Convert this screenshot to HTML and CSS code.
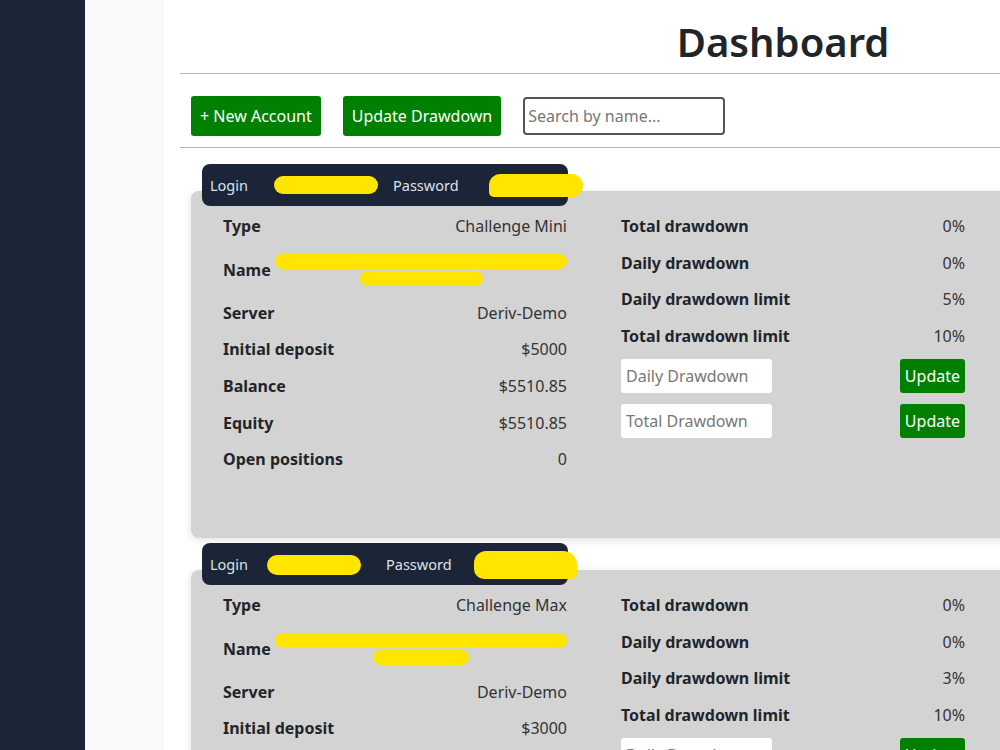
FILE: index.html
```html
<!DOCTYPE html>
<html lang="en">
<head>
    <meta charset="UTF-8">
    <meta name="viewport" content="width=device-width, initial-scale=1.0">
    <title>Dashboard</title>
    <link rel="stylesheet" href="styles.css">
</head>
<body>

<div class="layout">
    <!-- Sidebar -->
    <aside class="sidebar"></aside>
    <div class="rail"></div>

    <!-- Main content -->
    <main class="main">
        <h1 class="title">Dashboard</h1>
        <hr class="divider">

        <div class="toolbar">
            <button class="btn">+ New Account</button>
            <button class="btn">Update Drawdown</button>
            <input type="text" class="search" placeholder="Search by name...">
        </div>
        <hr class="divider">

        <div class="accounts">
            <!-- Account 1 -->
            <section class="account">
                <div class="creds">
                    <span>Login</span>
                    <span class="mark mark-login"></span>
                    <span>Password</span>
                    <span class="mark mark-pass"></span>
                </div>
                <div class="card">
                    <div class="col">
                        <div class="row"><span class="label">Type</span><span class="value">Challenge Mini</span></div>
                        <div class="row row-name">
                            <span class="label">Name</span>
                            <span class="value name-marks">
                                <span class="mark mark-name1"></span>
                                <span class="mark mark-name2"></span>
                            </span>
                        </div>
                        <div class="row"><span class="label">Server</span><span class="value">Deriv-Demo</span></div>
                        <div class="row"><span class="label">Initial deposit</span><span class="value">$5000</span></div>
                        <div class="row"><span class="label">Balance</span><span class="value">$5510.85</span></div>
                        <div class="row"><span class="label">Equity</span><span class="value">$5510.85</span></div>
                        <div class="row"><span class="label">Open positions</span><span class="value">0</span></div>
                    </div>
                    <div class="col">
                        <div class="row"><span class="label">Total drawdown</span><span class="value">0%</span></div>
                        <div class="row"><span class="label">Daily drawdown</span><span class="value">0%</span></div>
                        <div class="row"><span class="label">Daily drawdown limit</span><span class="value">5%</span></div>
                        <div class="row"><span class="label">Total drawdown limit</span><span class="value">10%</span></div>
                        <div class="form-row">
                            <input type="text" class="field" placeholder="Daily Drawdown">
                            <button class="btn btn-small">Update</button>
                        </div>
                        <div class="form-row">
                            <input type="text" class="field" placeholder="Total Drawdown">
                            <button class="btn btn-small">Update</button>
                        </div>
                    </div>
                </div>
            </section>

            <!-- Account 2 -->
            <section class="account">
                <div class="creds">
                    <span>Login</span>
                    <span class="mark mark-login2"></span>
                    <span>Password</span>
                    <span class="mark mark-pass2"></span>
                </div>
                <div class="card">
                    <div class="col">
                        <div class="row"><span class="label">Type</span><span class="value">Challenge Max</span></div>
                        <div class="row row-name">
                            <span class="label">Name</span>
                            <span class="value name-marks">
                                <span class="mark mark-name1"></span>
                                <span class="mark mark-name3"></span>
                            </span>
                        </div>
                        <div class="row"><span class="label">Server</span><span class="value">Deriv-Demo</span></div>
                        <div class="row"><span class="label">Initial deposit</span><span class="value">$3000</span></div>
                        <div class="row"><span class="label">Balance</span><span class="value">$3000</span></div>
                        <div class="row"><span class="label">Equity</span><span class="value">$3000</span></div>
                        <div class="row"><span class="label">Open positions</span><span class="value">0</span></div>
                    </div>
                    <div class="col">
                        <div class="row"><span class="label">Total drawdown</span><span class="value">0%</span></div>
                        <div class="row"><span class="label">Daily drawdown</span><span class="value">0%</span></div>
                        <div class="row"><span class="label">Daily drawdown limit</span><span class="value">3%</span></div>
                        <div class="row"><span class="label">Total drawdown limit</span><span class="value">10%</span></div>
                        <div class="form-row">
                            <input type="text" class="field" placeholder="Daily Drawdown">
                            <button class="btn btn-small">Update</button>
                        </div>
                        <div class="form-row">
                            <input type="text" class="field" placeholder="Total Drawdown">
                            <button class="btn btn-small">Update</button>
                        </div>
                    </div>
                </div>
            </section>
        </div>
    </main>
</div>

</body>
</html>
```

FILE: styles.css
```css
body {
    margin: 0;
    font-family: "Noto Sans", "Open Sans", sans-serif;
    color: #212529;
    overflow: hidden;
}
.layout {
    display: flex;
    min-height: 100vh;
}
.sidebar {
    width: 85px;
    flex-shrink: 0;
    background: #1b2537;
}
.rail {
    width: 79px;
    flex-shrink: 0;
    background: #f8f9fb;
}
.main {
    width: 1206px;
    flex-shrink: 0;
    padding: 0 0 0 16px;
}
.title {
    margin: 0;
    padding-top: 12px;
    height: 73px;
    line-height: 60px;
    font-size: 40px;
    font-weight: 600;
    text-align: center;
    box-sizing: border-box;
}
.divider {
    margin: 0;
    border: none;
    border-top: 1px solid #b4b4b4;
}

/* Toolbar */
.toolbar {
    display: flex;
    align-items: center;
    gap: 22px;
    padding: 22px 11px 11px;
}
.btn {
    background: #008000;
    color: #fff;
    border: none;
    border-radius: 3px;
    font-family: inherit;
    font-size: 16px;
    height: 40px;
    padding: 0 9px;
    cursor: pointer;
}
.search {
    width: 202px;
    height: 38px;
    box-sizing: border-box;
    border: 2px solid #555;
    border-radius: 4px;
    padding: 0 3px;
    font-family: inherit;
    font-size: 16px;
}
.search::placeholder,
.field::placeholder {
    color: #777;
}

/* Accounts */
.accounts {
    display: flex;
    flex-direction: column;
    gap: 5px;
    padding: 16px 0 0 11px;
}
.creds {
    position: relative;
    z-index: 1;
    display: flex;
    align-items: center;
    width: 366px;
    height: 42px;
    box-sizing: border-box;
    margin-left: 11px;
    padding-left: 8px;
    background: #1b2537;
    color: #dde1e7;
    border-radius: 8px;
    font-size: 14.5px;
}
.creds > span {
    flex-shrink: 0;
}
.mark {
    display: inline-block;
    background: #ffe500;
    border-radius: 10px;
}
.mark-login { width: 104px; height: 18px; margin: 0 15px 0 26px; }
.mark-pass { width: 94px; height: 23px; margin: 0 0 0 30px; border-radius: 12px 12px 12px 5px; }
.mark-login2 { width: 94px; height: 20px; margin: 2px 25px 0 19px; }
.mark-pass2 { width: 103px; height: 28px; margin: 2px 0 0 22px; border-radius: 12px 14px 6px 10px; }

.card {
    display: flex;
    gap: 54px;
    margin-top: -15px;
    width: 1180px;
    min-height: 347px;
    box-sizing: border-box;
    padding: 17px 32px 0;
    background: #d3d3d3;
    border-radius: 8px;
    box-shadow: 0 2px 8px rgba(0, 0, 0, 0.12);
}
.col {
    width: 344px;
    display: flex;
    flex-direction: column;
}
.row {
    display: flex;
    justify-content: space-between;
    align-items: center;
    height: 36.6px;
    font-size: 16px;
}
.row-name {
    height: 50px;
}
.label {
    font-weight: 700;
}
.value {
    color: #333;
    text-align: right;
}
.name-marks {
    display: flex;
    flex-direction: column;
    align-items: center;
    gap: 2px;
    width: 292px;
}
.mark-name1 { width: 292px; height: 15px; }
.mark-name2 { width: 123px; height: 15px; }
.mark-name3 { width: 96px; height: 15px; }

.form-row {
    display: flex;
    justify-content: space-between;
    align-items: center;
    margin-top: 11px;
}
.row + .form-row {
    margin-top: 5px;
}
.field {
    width: 151px;
    height: 34px;
    box-sizing: border-box;
    border: none;
    border-radius: 3px;
    padding: 0 5px;
    font-family: inherit;
    font-size: 16px;
}
.btn-small {
    height: 34px;
    padding: 0 5px;
    font-size: 16px;
}
```
